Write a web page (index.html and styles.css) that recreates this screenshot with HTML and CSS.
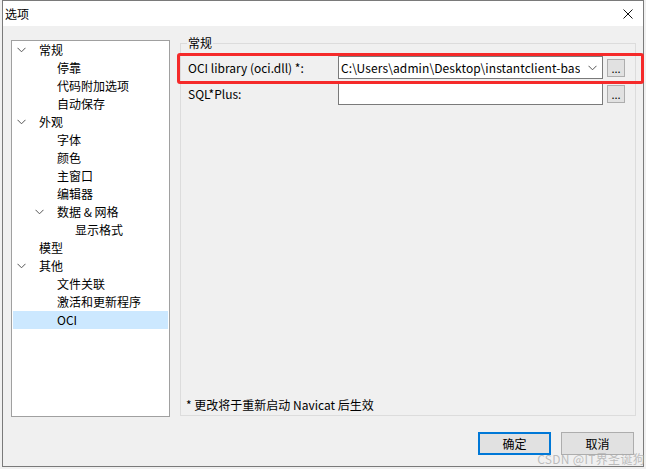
FILE: index.html
```html
<!DOCTYPE html>
<html lang="zh-CN">
<head>
<meta charset="utf-8">
<title>选项</title>
<link rel="stylesheet" href="styles.css">
</head>
<body>
<div class="window">
  <div class="titlebar">
    <span class="title">选项</span>
    <svg class="close" width="10" height="10" viewBox="0 0 10 10"><path d="M0.5 0.5 L9.5 9.5 M9.5 0.5 L0.5 9.5" stroke="#111" stroke-width="1" fill="none"/></svg>
  </div>
  <div class="content">
    <div class="main">
      <div class="tree">
        <div class="row lv0"><span class="tog"><svg width="9" height="6" viewBox="0 0 9 6"><path d="M0.5 0.8 L4.5 4.8 L8.5 0.8" stroke="#555" fill="none"/></svg></span><span>常规</span></div>
        <div class="row lv1"><span class="tog"></span><span>停靠</span></div>
        <div class="row lv1"><span class="tog"></span><span>代码附加选项</span></div>
        <div class="row lv1"><span class="tog"></span><span>自动保存</span></div>
        <div class="row lv0"><span class="tog"><svg width="9" height="6" viewBox="0 0 9 6"><path d="M0.5 0.8 L4.5 4.8 L8.5 0.8" stroke="#555" fill="none"/></svg></span><span>外观</span></div>
        <div class="row lv1"><span class="tog"></span><span>字体</span></div>
        <div class="row lv1"><span class="tog"></span><span>颜色</span></div>
        <div class="row lv1"><span class="tog"></span><span>主窗口</span></div>
        <div class="row lv1"><span class="tog"></span><span>编辑器</span></div>
        <div class="row lv1"><span class="tog"><svg width="9" height="6" viewBox="0 0 9 6"><path d="M0.5 0.8 L4.5 4.8 L8.5 0.8" stroke="#555" fill="none"/></svg></span><span>数据 &amp; 网格</span></div>
        <div class="row lv2"><span class="tog"></span><span>显示格式</span></div>
        <div class="row lv0"><span class="tog"></span><span>模型</span></div>
        <div class="row lv0"><span class="tog"><svg width="9" height="6" viewBox="0 0 9 6"><path d="M0.5 0.8 L4.5 4.8 L8.5 0.8" stroke="#555" fill="none"/></svg></span><span>其他</span></div>
        <div class="row lv1"><span class="tog"></span><span>文件关联</span></div>
        <div class="row lv1"><span class="tog"></span><span>激活和更新程序</span></div>
        <div class="row lv1 selected"><span class="tog"></span><span>OCI</span></div>
      </div>
      <fieldset class="group">
        <legend>常规</legend>
        <div class="fields">
          <div class="field">
            <label class="label">OCI library (oci.dll) *:</label>
            <div class="combo">
              <span class="combo-text">C:\Users\admin\Desktop\instantclient-bas</span>
              <svg class="combo-arrow" width="9" height="6" viewBox="0 0 9 6"><path d="M0.5 0.8 L4.5 4.8 L8.5 0.8" stroke="#555" fill="none"/></svg>
            </div>
            <button class="browse">...</button>
          </div>
          <div class="field">
            <label class="label">SQL*Plus:</label>
            <div class="input"></div>
            <button class="browse">...</button>
          </div>
        </div>
        <div class="note">* 更改将于重新启动 Navicat 后生效</div>
      </fieldset>
    </div>
    <div class="actions">
      <button class="btn primary">确定</button>
      <button class="btn">取消</button>
    </div>
  </div>
  <div class="mark"></div>
</div>
<div class="watermark">CSDN @IT界圣诞狗</div>
</body>
</html>
```

FILE: styles.css
```css
* { box-sizing: border-box; }

html, body {
  margin: 0;
  width: 646px;
  height: 469px;
  overflow: hidden;
  background: #f0f0f0;
  font-family: "Noto Sans CJK SC", "Noto Sans", sans-serif;
  font-size: 12px;
  color: #000;
}

body { padding: 0 2px 0 2px; position: relative; }

.window {
  position: relative;
  width: 642px;
  height: 467px;
  border: 1px solid #7a7a7a;
  background: #f0f0f0;
  display: flex;
  flex-direction: column;
}

.titlebar {
  height: 25px;
  flex: none;
  background: #fff;
  display: flex;
  align-items: center;
  justify-content: space-between;
  padding: 0 10px 0 2px;
}

.title { line-height: 18px; }

.close { display: block; }

.content {
  flex: 1;
  display: flex;
  flex-direction: column;
  padding: 8px 6px 0 8px;
}

.main {
  display: flex;
  gap: 10px;
  align-items: flex-start;
}

.tree {
  width: 159px;
  height: 377px;
  margin-top: 6px;
  background: #fff;
  border: 1px solid #a0a0a0;
  padding: 0 1px;
}

.row {
  height: 18px;
  line-height: 18px;
  display: flex;
  align-items: center;
  white-space: nowrap;
}

.row.lv0 { padding-left: 0; }
.row.lv1 { padding-left: 18px; }
.row.lv2 { padding-left: 36px; }

.row.selected { background: #cce8ff; }

.tog {
  width: 26px;
  flex: none;
  display: flex;
  align-items: center;
  padding-left: 4px;
}

.tog svg { display: block; }

.group {
  margin: 0;
  width: 456px;
  height: 382px;
  border: 1px solid #dcdcdc;
  padding: 4px 9px 1px 5px;
  display: flex;
  flex-direction: column;
  justify-content: space-between;
  min-width: 0;
}

.group legend {
  padding: 0 1px;
  margin-left: 1px;
  line-height: 18px;
}

.fields {
  display: flex;
  flex-direction: column;
  gap: 3px;
  padding-left: 2px;
}

.field {
  display: flex;
  align-items: center;
  height: 23px;
}

.label {
  width: 150px;
  flex: none;
  line-height: 18px;
}

.combo, .input {
  width: 265px;
  height: 23px;
  flex: none;
  background: #fff;
  border: 1px solid #7a7a7a;
}

.combo {
  display: flex;
  align-items: center;
  padding: 0 5px 0 2px;
  justify-content: space-between;
}

.combo-text {
  white-space: nowrap;
  overflow: hidden;
  letter-spacing: 0.1px;
}

.combo-arrow { display: block; flex: none; }

.browse {
  margin: 0 0 0 4px;
  width: 18px;
  height: 18px;
  padding: 0;
  border: 1px solid #adadad;
  background: #e1e1e1;
  font: inherit;
  font-size: 11px;
  line-height: 10px;
  color: #000;
}

.note {
  line-height: 18px;
}

.actions {
  display: flex;
  justify-content: flex-end;
  gap: 10px;
  margin-top: 15px;
  padding-right: 3px;
}

.btn {
  width: 73px;
  height: 23px;
  border: 1px solid #adadad;
  background: #e1e1e1;
  font: inherit;
  color: #000;
  padding: 0;
}

.btn.primary { border: 2px solid #0078d7; }

/* red annotation frame over the first path row */
.mark {
  position: absolute;
  left: 174px;
  top: 52px;
  width: 467px;
  height: 31px;
  border: 3px solid #f52a2a;
  border-radius: 3px;
  pointer-events: none;
}

.watermark {
  position: absolute;
  right: 1px;
  bottom: 3px;
  font-size: 12px;
  line-height: 14px;
  color: rgba(170, 170, 170, 0.75);
  white-space: nowrap;
  letter-spacing: 0.3px;
}
```
